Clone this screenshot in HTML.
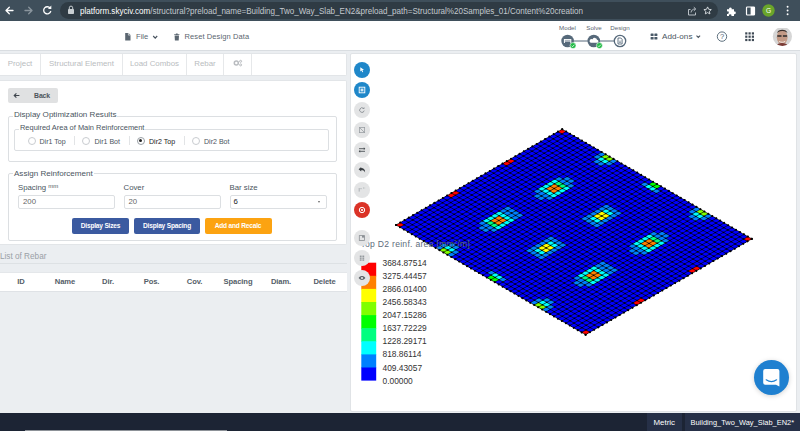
<!DOCTYPE html>
<html>
<head>
<meta charset="utf-8">
<title>SkyCiv</title>
<style>
*{box-sizing:border-box;margin:0;padding:0}
html,body{width:800px;height:431px;overflow:hidden;background:#ebeef1;font-family:"Liberation Sans",sans-serif;}
.abs{position:absolute}
#chrome{position:absolute;left:0;top:0;width:800px;height:20.6px;background:#3f4f5b}
#pill{position:absolute;left:60px;top:2px;width:658px;height:17px;border-radius:9px;background:#2f3b44}
#url{position:absolute;left:80px;top:4px;font-size:9.6px;line-height:13px;color:#c3c9ce;white-space:nowrap;transform:scaleX(0.84);transform-origin:0 0}
#url b{color:#fff;font-weight:normal}
#hdr{position:absolute;left:0;top:20.6px;width:800px;height:30.4px;background:#fff;border-bottom:1px solid #d9dde1}
.t{position:absolute;white-space:nowrap}
#tabs{position:absolute;left:0;top:53.2px;width:346.8px;height:22.6px;background:#fff;border:1px solid #e2e5e8;border-left:none;border-radius:0 2px 2px 0}
#tabs span{position:absolute;top:0;height:20.6px;line-height:20.6px;font-size:7.9px;color:#b9bcc0;border-right:1px solid #e6e8ea;text-align:center}
#card{position:absolute;left:0;top:79.5px;width:346.8px;height:165.2px;background:#fff;border:1px solid #e2e5e8;border-left:none;border-radius:0 2px 2px 0}
.fs{position:absolute;border:1px solid #dcdfe2;border-radius:2px}
.lg{position:absolute;background:#fff;font-size:7.9px;color:#4a5560;padding:0 1px;white-space:nowrap;line-height:9px}
.inp{position:absolute;height:14px;border:1px solid #dcdfe2;border-radius:2px;font-size:7.8px;color:#666;line-height:12px;padding-left:4px;background:#fff}
.btn{position:absolute;height:16.4px;border-radius:2px;color:#fff;font-size:6.6px;font-weight:bold;text-align:center;line-height:16.4px;letter-spacing:-0.2px}
.rad{position:absolute;width:8px;height:8px;border:1px solid #c9ccd0;border-radius:50%;background:#fff}
.rl{position:absolute;font-size:7.05px;color:#4a5560;white-space:nowrap;line-height:9px}
#rp{position:absolute;left:349.5px;top:53.2px;width:447.3px;height:358.5px;background:#fff;border:1px solid #e0e3e6;border-radius:2px}
.cb{position:absolute;left:353.8px;width:16.4px;height:16.4px;border-radius:50%;background:#e3e4e5}
.cb.b{background:#1f87c9}
.cb.r{background:#db3327}
.cb svg{position:absolute;left:0;top:0}
.slab{position:absolute;left:0;top:0}
#leg div{position:absolute;left:361px;width:15px;height:13.1px}
.ll{position:absolute;left:382.5px;font-size:8.4px;color:#333;line-height:10px;white-space:nowrap}
#bot{position:absolute;left:0;top:413.4px;width:800px;height:18px;background:#1c2434}
#th{position:absolute;left:0;top:272.3px;width:346.8px;height:19.4px;background:#fff;border-top:1px solid #e4e7ea;border-bottom:1px solid #dfe2e6}
#th span{position:absolute;top:0;line-height:17.2px;font-size:7.6px;color:#555e68;font-weight:bold;transform:translateX(-50%);white-space:nowrap;letter-spacing:-0.1px}
</style>
</head>
<body>
<!-- browser chrome -->
<div id="chrome">
  <svg class="abs" style="left:0;top:0" width="60" height="21" viewBox="0 0 60 21">
    <g fill="none" stroke="#fff" stroke-width="1.3" stroke-linecap="round" stroke-linejoin="round">
      <path d="M13 10.5H6.2M9.3 7.2L6 10.5l3.3 3.3"/>
      <path d="M25 10.5h6.8M28.7 7.2l3.3 3.3-3.3 3.3" stroke="#8a959d"/>
      <path d="M50.2 8.2a3.6 3.6 0 1 0 .5 3.3"/>
    </g>
    <path d="M51.3 5.6v3.4h-3.4z" fill="#fff"/>
  </svg>
  <div id="pill"></div>
  <svg class="abs" style="left:67px;top:5px" width="8" height="10" viewBox="0 0 8 10"><rect x="1" y="4" width="6" height="5" rx="0.8" fill="#c9cfd3"/><path d="M2.3 4.2V2.8a1.7 1.7 0 0 1 3.4 0v1.4" fill="none" stroke="#c9cfd3" stroke-width="1"/></svg>
  <div id="url"><b>platform.skyciv.com</b>/structural?preload_name=Building_Two_Way_Slab_EN2&amp;preload_path=Structural%20Samples_01/Content%20creation</div>
  <svg class="abs" style="left:680px;top:3px" width="120" height="16" viewBox="0 0 120 16">
    <!-- share -->
    <g fill="none" stroke="#b9c0c6" stroke-width="1">
      <path d="M10.5 6.5H8.5v5.5h7v-2.5"/><path d="M11 9.5c.3-2.2 1.8-3.5 4-3.5M13.8 4.2L15.8 6l-2 1.8"/>
    </g>
    <!-- star -->
    <path d="M27.600 3.900l1.100 2.400 2.600.3-1.950 1.750.55 2.550-2.300-1.300-2.300 1.300.55-2.550-1.950-1.750 2.600-.3z" fill="none" stroke="#dfe3e6" stroke-width="0.900" stroke-linejoin="round"/>
    <!-- puzzle -->
    <path d="M47 6.2h2.2a1.3 1.3 0 1 1 2.4 0H54v2.4a1.3 1.3 0 1 1 0 2.4v2H51.4a1.3 1.3 0 1 0-2.4 0H47v-2.2a1.3 1.3 0 1 0 0-2.4z" fill="#fff"/>
    <!-- side panel -->
    <rect x="66.5" y="4" width="8" height="8" rx="0.8" fill="none" stroke="#fff" stroke-width="1.2"/><rect x="70.6" y="4" width="4" height="8" fill="#fff"/>
    <!-- profile -->
    <circle cx="88.5" cy="7.5" r="6.2" fill="#6aa52a"/>
    <text x="88.5" y="10" font-size="6.6" fill="#fff" text-anchor="middle" font-family="Liberation Sans">G</text>
    <circle cx="107.6" cy="3.8" r="0.95" fill="#fff"/><circle cx="107.6" cy="7.5" r="0.95" fill="#fff"/><circle cx="107.6" cy="11.2" r="0.95" fill="#fff"/>
  </svg>
</div>

<!-- app header -->
<div id="hdr"></div>
<svg class="abs" style="left:120px;top:30px" width="140" height="14" viewBox="0 0 140 14">
  <path d="M5.2 3h3.3l2 2v5.6H5.2z" fill="#5b6670"/><path d="M8.4 3v2.1h2.1" fill="none" stroke="#fff" stroke-width="0.6"/>
  <path d="M33.2 6l2 2.100 2-2.100" fill="none" stroke="#4a5560" stroke-width="1.200"/>
  <path d="M54.600 5.400h4.400l-.3 5h-3.800zM54.200 4.300h5.200v.8h-5.200zM55.900 3.600h1.800v.8h-1.800z" fill="#5b6670"/>
</svg>
<div class="t" style="left:136px;top:32.4px;font-size:7.6px;color:#5b6670;line-height:10px">File</div>
<div class="t" style="left:184.5px;top:32.4px;font-size:7.5px;color:#5b6670;line-height:10px;letter-spacing:0.1px">Reset Design Data</div>

<div class="t" style="left:567.5px;top:24px;font-size:6.2px;color:#5b6670;line-height:7px;transform:translateX(-50%)">Model</div>
<div class="t" style="left:594px;top:24px;font-size:6.2px;color:#5b6670;line-height:7px;transform:translateX(-50%)">Solve</div>
<div class="t" style="left:620px;top:24px;font-size:6.2px;color:#5b6670;line-height:7px;transform:translateX(-50%)">Design</div>
<svg class="abs" style="left:555px;top:31px" width="80" height="20" viewBox="0 0 80 20">
  <path d="M13 10h52" stroke="#56697a" stroke-width="1"/>
  <circle cx="12.6" cy="10" r="6.3" fill="#56697a"/>
  <circle cx="38.8" cy="10" r="6.3" fill="#56697a"/>
  <circle cx="65" cy="10" r="5.7" fill="#fff" stroke="#56697a" stroke-width="1.3"/>
  <path d="M9.4 8v4M15.8 8v4M9.4 10h6.4M9.4 8.6h6.4" stroke="#fff" stroke-width="1" fill="none"/>
  <path d="M35.6 11.8h6.2a1.5 1.5 0 0 0 .2-3 2.3 2.3 0 0 0-4.4-.5 1.8 1.8 0 0 0-2 3.5z" fill="#fff"/>
  <path d="M63 7h2.8l1.3 1.3V13H63z" fill="none" stroke="#56697a" stroke-width="0.9"/><path d="M64 10.2h2.1M64 11.5h2.1" stroke="#56697a" stroke-width="0.6"/>
  <circle cx="18" cy="14.6" r="3" fill="#21ba45" stroke="#fff" stroke-width="0.6"/><path d="M16.6 14.7l1 1 1.8-2" stroke="#fff" stroke-width="0.8" fill="none"/>
  <circle cx="44.4" cy="14.6" r="3" fill="#21ba45" stroke="#fff" stroke-width="0.6"/><path d="M43 14.7l1 1 1.8-2" stroke="#fff" stroke-width="0.8" fill="none"/>
</svg>
<svg class="abs" style="left:648px;top:28px" width="152" height="20" viewBox="0 0 152 20">
  <g fill="#4a5a68"><rect x="2.6" y="5.4" width="3" height="2.6" rx="0.5"/><rect x="6.4" y="5.4" width="3" height="2.6" rx="0.5"/><rect x="2.6" y="8.9" width="3" height="2.6" rx="0.5"/><rect x="6.4" y="8.9" width="3" height="2.6" rx="0.5"/></g>
  <path d="M48.5 7.6l1.8 1.9 1.8-1.9" fill="none" stroke="#4a5560" stroke-width="1.1"/>
  <circle cx="74" cy="8.600" r="4.700" fill="none" stroke="#4d6272" stroke-width="0.900"/>
  <text x="74" y="11.400" font-size="7.600" fill="#4d6272" text-anchor="middle" font-family="Liberation Sans">?</text>
  <g fill="#3f4a55">
    <rect x="97.2" y="4.3" width="2.2" height="2.2"/><rect x="100.5" y="4.3" width="2.2" height="2.2"/><rect x="103.8" y="4.3" width="2.2" height="2.2"/>
    <rect x="97.2" y="7.6" width="2.2" height="2.2"/><rect x="100.5" y="7.6" width="2.2" height="2.2"/><rect x="103.8" y="7.6" width="2.2" height="2.2"/>
    <rect x="97.2" y="10.9" width="2.2" height="2.2"/><rect x="100.5" y="10.9" width="2.2" height="2.2"/><rect x="103.8" y="10.9" width="2.2" height="2.2"/>
  </g>
  <!-- avatar -->
  <clipPath id="av"><circle cx="134.400" cy="8.500" r="9.600"/></clipPath>
  <g clip-path="url(#av)">
    <rect x="124" y="-2" width="22" height="22" fill="#d6d6d6"/>
    <ellipse cx="134.200" cy="9.200" rx="5.400" ry="7.200" fill="#c39a86"/>
    <path d="M129 5.200c.5-4.500 10-4.500 10.500 0l-1-1c-2.500-1.600-6-1.600-8.500 0z" fill="#3a302c"/>
    <path d="M128 18c1-4 11-4 12 0z" fill="#7a3b35"/>
    <path d="M129.300 8h4.200M134.900 8h4.200" stroke="#2b2a2a" stroke-width="1.500"/>
    <path d="M131.2 13.3c1.6 1.3 4.4 1.3 6 0" stroke="#f3e9e4" stroke-width="1" fill="none"/>
  </g>
</svg>
<div class="t" style="left:662px;top:31.5px;font-size:8.1px;color:#4a5560;line-height:10px;letter-spacing:0.05px">Add-ons</div>

<!-- left: tabs -->
<div id="tabs">
  <span style="left:0;width:41px">Project</span>
  <span style="left:41px;width:82px">Structural Element</span>
  <span style="left:123px;width:64px">Load Combos</span>
  <span style="left:187px;width:37px">Rebar</span>
  <span style="left:224px;width:28px"><svg width="10" height="8" viewBox="0 0 10 8" style="vertical-align:-1px"><circle cx="3.3" cy="4" r="2" fill="none" stroke="#b9bcc0" stroke-width="1.5"/><circle cx="7.6" cy="2.3" r="1" fill="none" stroke="#b9bcc0" stroke-width="1"/><circle cx="7.6" cy="5.9" r="1" fill="none" stroke="#b9bcc0" stroke-width="1"/></svg></span>
</div>

<!-- left: card -->
<div id="card"></div>
<div class="abs" style="left:8px;top:87.8px;width:50px;height:15.2px;background:#e0e1e2;border-radius:2px"></div>
<svg class="abs" style="left:12px;top:91px" width="10" height="9" viewBox="0 0 10 9"><path d="M7.4 4.5H2.4M4.4 2.3L2.2 4.5l2.2 2.2" fill="none" stroke="#3e454c" stroke-width="1.1"/></svg>
<div class="t" style="left:34px;top:91.5px;font-size:6.9px;color:#4d545b;line-height:8px;font-weight:bold;letter-spacing:-0.1px">Back</div>

<div class="fs" style="left:8px;top:115.5px;width:329px;height:46.5px"></div>
<div class="lg" style="left:13px;top:110px;font-size:8.05px">Display Optimization Results</div>
<div class="fs" style="left:14px;top:129px;width:315px;height:22px"></div>
<div class="lg" style="left:19px;top:122.5px;font-size:7.45px">Required Area of Main Reinforcement</div>
<div class="rad" style="left:28px;top:136.5px"></div><div class="rl" style="left:39.5px;top:136.5px">Dir1 Top</div>
<div class="rad" style="left:82px;top:136.5px"></div><div class="rl" style="left:94.5px;top:136.5px">Dir1 Bot</div>
<div class="rad" style="left:136.5px;top:136.5px;border-color:#9aa0a6"></div><div class="abs" style="left:138.8px;top:138.8px;width:3.4px;height:3.4px;border-radius:50%;background:#222"></div><div class="rl" style="left:149px;top:136.5px;color:#222">Dir2 Top</div>
<div class="rad" style="left:191.5px;top:136.5px"></div><div class="rl" style="left:204px;top:136.5px">Dir2 Bot</div>
<div class="abs" style="left:74px;top:136px;width:1px;height:9px;background:#e2e4e6"></div>
<div class="abs" style="left:128.5px;top:136px;width:1px;height:9px;background:#e2e4e6"></div>
<div class="abs" style="left:183.5px;top:136px;width:1px;height:9px;background:#e2e4e6"></div>

<div class="fs" style="left:8px;top:172.8px;width:329px;height:68.2px"></div>
<div class="lg" style="left:13px;top:168.5px;font-size:8.05px">Assign Reinforcement</div>
<div class="t" style="left:18px;top:183px;font-size:7.8px;color:#4a5560;line-height:9px">Spacing <span style="font-size:6px;position:relative;top:-2.4px">mm</span></div>
<div class="t" style="left:123.5px;top:183px;font-size:7.8px;color:#4a5560;line-height:9px">Cover</div>
<div class="t" style="left:229.5px;top:183px;font-size:7.8px;color:#4a5560;line-height:9px">Bar size</div>
<div class="inp" style="left:18px;top:194.5px;width:97px">200</div>
<div class="inp" style="left:123.5px;top:194.5px;width:97px">20</div>
<div class="inp" style="left:229.5px;top:194.5px;width:97px;color:#222;padding-left:3px">6</div>
<div class="abs" style="left:317.5px;top:201px;width:0;height:0;border-left:1.8px solid transparent;border-right:1.8px solid transparent;border-top:2.2px solid #666"></div>
<div class="btn" style="left:72px;top:218px;width:57px;background:#3b5aa0">Display Sizes</div>
<div class="btn" style="left:134px;top:218px;width:66px;background:#3b5aa0">Display Spacing</div>
<div class="btn" style="left:204.5px;top:218px;width:67px;background:#fca311">Add and Recalc</div>

<!-- list of rebar -->
<div class="t" style="left:0;top:251.8px;font-size:8.2px;color:#9aa0a6;line-height:9px">List of Rebar</div>
<div class="abs" style="left:0;top:262.8px;width:346.8px;height:1px;background:#dde1e4"></div>
<div id="th">
  <span style="left:21px">ID</span><span style="left:65px">Name</span><span style="left:108px">Dir.</span><span style="left:151.5px">Pos.</span>
  <span style="left:194.5px">Cov.</span><span style="left:238px">Spacing</span><span style="left:281px">Diam.</span><span style="left:324.5px">Delete</span>
</div>

<!-- right panel -->
<div id="rp"></div>
<svg class="slab" width="800" height="431" viewBox="0 0 800 431">
<g transform="matrix(-4.2615 2.4564 3.9500 2.2854 562.20 129.20)" shape-rendering="crispEdges">
<rect x="0" y="0" width="39" height="48" fill="#0000ff"/>
<rect x="0" y="0" width="1" height="1" fill="#ff0000"/>
<rect x="0" y="10" width="1" height="1" fill="#0080ff"/>
<rect x="0" y="11" width="1" height="1" fill="#80ff00"/>
<rect x="0" y="12" width="1" height="1" fill="#80ff00"/>
<rect x="0" y="13" width="1" height="1" fill="#0080ff"/>
<rect x="0" y="23" width="1" height="1" fill="#00ff00"/>
<rect x="0" y="24" width="1" height="1" fill="#00ff00"/>
<rect x="0" y="34" width="1" height="1" fill="#0080ff"/>
<rect x="0" y="35" width="1" height="1" fill="#80ff00"/>
<rect x="0" y="36" width="1" height="1" fill="#80ff00"/>
<rect x="0" y="37" width="1" height="1" fill="#0080ff"/>
<rect x="0" y="47" width="1" height="1" fill="#ff0000"/>
<rect x="1" y="10" width="1" height="1" fill="#0080ff"/>
<rect x="1" y="11" width="1" height="1" fill="#00ffff"/>
<rect x="1" y="12" width="1" height="1" fill="#00ffff"/>
<rect x="1" y="13" width="1" height="1" fill="#0080ff"/>
<rect x="1" y="22" width="1" height="1" fill="#0080ff"/>
<rect x="1" y="23" width="1" height="1" fill="#00ffff"/>
<rect x="1" y="24" width="1" height="1" fill="#00ffff"/>
<rect x="1" y="25" width="1" height="1" fill="#0080ff"/>
<rect x="1" y="34" width="1" height="1" fill="#0080ff"/>
<rect x="1" y="35" width="1" height="1" fill="#00ffff"/>
<rect x="1" y="36" width="1" height="1" fill="#00ffff"/>
<rect x="1" y="37" width="1" height="1" fill="#0080ff"/>
<rect x="2" y="11" width="1" height="1" fill="#0080ff"/>
<rect x="2" y="12" width="1" height="1" fill="#0080ff"/>
<rect x="2" y="35" width="1" height="1" fill="#0080ff"/>
<rect x="2" y="36" width="1" height="1" fill="#0080ff"/>
<rect x="9" y="11" width="1" height="1" fill="#0080ff"/>
<rect x="9" y="12" width="1" height="1" fill="#0080ff"/>
<rect x="9" y="35" width="1" height="1" fill="#0080ff"/>
<rect x="9" y="36" width="1" height="1" fill="#0080ff"/>
<rect x="10" y="10" width="1" height="1" fill="#0080ff"/>
<rect x="10" y="11" width="1" height="1" fill="#0080ff"/>
<rect x="10" y="12" width="1" height="1" fill="#0080ff"/>
<rect x="10" y="13" width="1" height="1" fill="#0080ff"/>
<rect x="10" y="22" width="1" height="1" fill="#0080ff"/>
<rect x="10" y="23" width="1" height="1" fill="#0080ff"/>
<rect x="10" y="24" width="1" height="1" fill="#0080ff"/>
<rect x="10" y="25" width="1" height="1" fill="#0080ff"/>
<rect x="10" y="34" width="1" height="1" fill="#0080ff"/>
<rect x="10" y="35" width="1" height="1" fill="#0080ff"/>
<rect x="10" y="36" width="1" height="1" fill="#0080ff"/>
<rect x="10" y="37" width="1" height="1" fill="#0080ff"/>
<rect x="11" y="10" width="1" height="1" fill="#00ffff"/>
<rect x="11" y="11" width="1" height="1" fill="#00ff80"/>
<rect x="11" y="12" width="1" height="1" fill="#00ff80"/>
<rect x="11" y="13" width="1" height="1" fill="#00ffff"/>
<rect x="11" y="22" width="1" height="1" fill="#0080ff"/>
<rect x="11" y="23" width="1" height="1" fill="#00ffff"/>
<rect x="11" y="24" width="1" height="1" fill="#00ffff"/>
<rect x="11" y="25" width="1" height="1" fill="#0080ff"/>
<rect x="11" y="34" width="1" height="1" fill="#00ffff"/>
<rect x="11" y="35" width="1" height="1" fill="#00ff80"/>
<rect x="11" y="36" width="1" height="1" fill="#00ff80"/>
<rect x="11" y="37" width="1" height="1" fill="#00ffff"/>
<rect x="12" y="0" width="1" height="1" fill="#ff0000"/>
<rect x="12" y="10" width="1" height="1" fill="#00ffff"/>
<rect x="12" y="11" width="1" height="1" fill="#ff8000"/>
<rect x="12" y="12" width="1" height="1" fill="#ff8000"/>
<rect x="12" y="13" width="1" height="1" fill="#00ffff"/>
<rect x="12" y="22" width="1" height="1" fill="#0080ff"/>
<rect x="12" y="23" width="1" height="1" fill="#ffff00"/>
<rect x="12" y="24" width="1" height="1" fill="#ffff00"/>
<rect x="12" y="25" width="1" height="1" fill="#0080ff"/>
<rect x="12" y="34" width="1" height="1" fill="#00ffff"/>
<rect x="12" y="35" width="1" height="1" fill="#ff8000"/>
<rect x="12" y="36" width="1" height="1" fill="#ff8000"/>
<rect x="12" y="37" width="1" height="1" fill="#00ffff"/>
<rect x="12" y="47" width="1" height="1" fill="#ff0000"/>
<rect x="13" y="0" width="1" height="1" fill="#ff0000"/>
<rect x="13" y="10" width="1" height="1" fill="#00ffff"/>
<rect x="13" y="11" width="1" height="1" fill="#ff8000"/>
<rect x="13" y="12" width="1" height="1" fill="#ff8000"/>
<rect x="13" y="13" width="1" height="1" fill="#00ffff"/>
<rect x="13" y="22" width="1" height="1" fill="#0080ff"/>
<rect x="13" y="23" width="1" height="1" fill="#ffff00"/>
<rect x="13" y="24" width="1" height="1" fill="#ffff00"/>
<rect x="13" y="25" width="1" height="1" fill="#0080ff"/>
<rect x="13" y="34" width="1" height="1" fill="#00ffff"/>
<rect x="13" y="35" width="1" height="1" fill="#ff8000"/>
<rect x="13" y="36" width="1" height="1" fill="#ff8000"/>
<rect x="13" y="37" width="1" height="1" fill="#00ffff"/>
<rect x="13" y="47" width="1" height="1" fill="#ff0000"/>
<rect x="14" y="10" width="1" height="1" fill="#00ffff"/>
<rect x="14" y="11" width="1" height="1" fill="#00ffff"/>
<rect x="14" y="12" width="1" height="1" fill="#00ffff"/>
<rect x="14" y="13" width="1" height="1" fill="#00ffff"/>
<rect x="14" y="22" width="1" height="1" fill="#0080ff"/>
<rect x="14" y="23" width="1" height="1" fill="#00ffff"/>
<rect x="14" y="24" width="1" height="1" fill="#00ffff"/>
<rect x="14" y="25" width="1" height="1" fill="#0080ff"/>
<rect x="14" y="34" width="1" height="1" fill="#00ffff"/>
<rect x="14" y="35" width="1" height="1" fill="#00ffff"/>
<rect x="14" y="36" width="1" height="1" fill="#00ffff"/>
<rect x="14" y="37" width="1" height="1" fill="#00ffff"/>
<rect x="15" y="10" width="1" height="1" fill="#0080ff"/>
<rect x="15" y="11" width="1" height="1" fill="#0080ff"/>
<rect x="15" y="12" width="1" height="1" fill="#0080ff"/>
<rect x="15" y="13" width="1" height="1" fill="#0080ff"/>
<rect x="15" y="22" width="1" height="1" fill="#0080ff"/>
<rect x="15" y="23" width="1" height="1" fill="#0080ff"/>
<rect x="15" y="24" width="1" height="1" fill="#0080ff"/>
<rect x="15" y="25" width="1" height="1" fill="#0080ff"/>
<rect x="15" y="34" width="1" height="1" fill="#0080ff"/>
<rect x="15" y="35" width="1" height="1" fill="#0080ff"/>
<rect x="15" y="36" width="1" height="1" fill="#0080ff"/>
<rect x="15" y="37" width="1" height="1" fill="#0080ff"/>
<rect x="16" y="11" width="1" height="1" fill="#0080ff"/>
<rect x="16" y="12" width="1" height="1" fill="#0080ff"/>
<rect x="16" y="35" width="1" height="1" fill="#0080ff"/>
<rect x="16" y="36" width="1" height="1" fill="#0080ff"/>
<rect x="22" y="10" width="1" height="1" fill="#0080ff"/>
<rect x="22" y="11" width="1" height="1" fill="#0080ff"/>
<rect x="22" y="12" width="1" height="1" fill="#0080ff"/>
<rect x="22" y="13" width="1" height="1" fill="#0080ff"/>
<rect x="22" y="34" width="1" height="1" fill="#0080ff"/>
<rect x="22" y="35" width="1" height="1" fill="#0080ff"/>
<rect x="22" y="36" width="1" height="1" fill="#0080ff"/>
<rect x="22" y="37" width="1" height="1" fill="#0080ff"/>
<rect x="23" y="10" width="1" height="1" fill="#0080ff"/>
<rect x="23" y="11" width="1" height="1" fill="#0080ff"/>
<rect x="23" y="12" width="1" height="1" fill="#0080ff"/>
<rect x="23" y="13" width="1" height="1" fill="#0080ff"/>
<rect x="23" y="22" width="1" height="1" fill="#0080ff"/>
<rect x="23" y="23" width="1" height="1" fill="#0080ff"/>
<rect x="23" y="24" width="1" height="1" fill="#0080ff"/>
<rect x="23" y="25" width="1" height="1" fill="#0080ff"/>
<rect x="23" y="34" width="1" height="1" fill="#0080ff"/>
<rect x="23" y="35" width="1" height="1" fill="#0080ff"/>
<rect x="23" y="36" width="1" height="1" fill="#0080ff"/>
<rect x="23" y="37" width="1" height="1" fill="#0080ff"/>
<rect x="24" y="10" width="1" height="1" fill="#00ffff"/>
<rect x="24" y="11" width="1" height="1" fill="#00ffff"/>
<rect x="24" y="12" width="1" height="1" fill="#00ffff"/>
<rect x="24" y="13" width="1" height="1" fill="#00ffff"/>
<rect x="24" y="22" width="1" height="1" fill="#0080ff"/>
<rect x="24" y="23" width="1" height="1" fill="#00ffff"/>
<rect x="24" y="24" width="1" height="1" fill="#00ffff"/>
<rect x="24" y="25" width="1" height="1" fill="#0080ff"/>
<rect x="24" y="34" width="1" height="1" fill="#00ffff"/>
<rect x="24" y="35" width="1" height="1" fill="#00ffff"/>
<rect x="24" y="36" width="1" height="1" fill="#00ffff"/>
<rect x="24" y="37" width="1" height="1" fill="#00ffff"/>
<rect x="25" y="0" width="1" height="1" fill="#ff0000"/>
<rect x="25" y="10" width="1" height="1" fill="#00ffff"/>
<rect x="25" y="11" width="1" height="1" fill="#ff8000"/>
<rect x="25" y="12" width="1" height="1" fill="#ff8000"/>
<rect x="25" y="13" width="1" height="1" fill="#00ffff"/>
<rect x="25" y="22" width="1" height="1" fill="#0080ff"/>
<rect x="25" y="23" width="1" height="1" fill="#ffff00"/>
<rect x="25" y="24" width="1" height="1" fill="#ffff00"/>
<rect x="25" y="25" width="1" height="1" fill="#0080ff"/>
<rect x="25" y="34" width="1" height="1" fill="#00ffff"/>
<rect x="25" y="35" width="1" height="1" fill="#ff8000"/>
<rect x="25" y="36" width="1" height="1" fill="#ff8000"/>
<rect x="25" y="37" width="1" height="1" fill="#00ffff"/>
<rect x="25" y="47" width="1" height="1" fill="#ff0000"/>
<rect x="26" y="0" width="1" height="1" fill="#ff0000"/>
<rect x="26" y="10" width="1" height="1" fill="#00ffff"/>
<rect x="26" y="11" width="1" height="1" fill="#ff8000"/>
<rect x="26" y="12" width="1" height="1" fill="#ff8000"/>
<rect x="26" y="13" width="1" height="1" fill="#00ffff"/>
<rect x="26" y="22" width="1" height="1" fill="#0080ff"/>
<rect x="26" y="23" width="1" height="1" fill="#ffff00"/>
<rect x="26" y="24" width="1" height="1" fill="#ffff00"/>
<rect x="26" y="25" width="1" height="1" fill="#0080ff"/>
<rect x="26" y="34" width="1" height="1" fill="#00ffff"/>
<rect x="26" y="35" width="1" height="1" fill="#ff8000"/>
<rect x="26" y="36" width="1" height="1" fill="#ff8000"/>
<rect x="26" y="37" width="1" height="1" fill="#00ffff"/>
<rect x="26" y="47" width="1" height="1" fill="#ff0000"/>
<rect x="27" y="10" width="1" height="1" fill="#00ffff"/>
<rect x="27" y="11" width="1" height="1" fill="#00ff80"/>
<rect x="27" y="12" width="1" height="1" fill="#00ff80"/>
<rect x="27" y="13" width="1" height="1" fill="#00ffff"/>
<rect x="27" y="22" width="1" height="1" fill="#0080ff"/>
<rect x="27" y="23" width="1" height="1" fill="#00ffff"/>
<rect x="27" y="24" width="1" height="1" fill="#00ffff"/>
<rect x="27" y="25" width="1" height="1" fill="#0080ff"/>
<rect x="27" y="34" width="1" height="1" fill="#00ffff"/>
<rect x="27" y="35" width="1" height="1" fill="#00ff80"/>
<rect x="27" y="36" width="1" height="1" fill="#00ff80"/>
<rect x="27" y="37" width="1" height="1" fill="#00ffff"/>
<rect x="28" y="10" width="1" height="1" fill="#0080ff"/>
<rect x="28" y="11" width="1" height="1" fill="#0080ff"/>
<rect x="28" y="12" width="1" height="1" fill="#0080ff"/>
<rect x="28" y="13" width="1" height="1" fill="#0080ff"/>
<rect x="28" y="22" width="1" height="1" fill="#0080ff"/>
<rect x="28" y="23" width="1" height="1" fill="#0080ff"/>
<rect x="28" y="24" width="1" height="1" fill="#0080ff"/>
<rect x="28" y="25" width="1" height="1" fill="#0080ff"/>
<rect x="28" y="34" width="1" height="1" fill="#0080ff"/>
<rect x="28" y="35" width="1" height="1" fill="#0080ff"/>
<rect x="28" y="36" width="1" height="1" fill="#0080ff"/>
<rect x="28" y="37" width="1" height="1" fill="#0080ff"/>
<rect x="29" y="11" width="1" height="1" fill="#0080ff"/>
<rect x="29" y="12" width="1" height="1" fill="#0080ff"/>
<rect x="29" y="35" width="1" height="1" fill="#0080ff"/>
<rect x="29" y="36" width="1" height="1" fill="#0080ff"/>
<rect x="36" y="11" width="1" height="1" fill="#0080ff"/>
<rect x="36" y="12" width="1" height="1" fill="#0080ff"/>
<rect x="36" y="35" width="1" height="1" fill="#0080ff"/>
<rect x="36" y="36" width="1" height="1" fill="#0080ff"/>
<rect x="37" y="10" width="1" height="1" fill="#0080ff"/>
<rect x="37" y="11" width="1" height="1" fill="#00ffff"/>
<rect x="37" y="12" width="1" height="1" fill="#00ffff"/>
<rect x="37" y="13" width="1" height="1" fill="#0080ff"/>
<rect x="37" y="22" width="1" height="1" fill="#0080ff"/>
<rect x="37" y="23" width="1" height="1" fill="#00ffff"/>
<rect x="37" y="24" width="1" height="1" fill="#00ffff"/>
<rect x="37" y="25" width="1" height="1" fill="#0080ff"/>
<rect x="37" y="34" width="1" height="1" fill="#0080ff"/>
<rect x="37" y="35" width="1" height="1" fill="#00ffff"/>
<rect x="37" y="36" width="1" height="1" fill="#00ffff"/>
<rect x="37" y="37" width="1" height="1" fill="#0080ff"/>
<rect x="38" y="0" width="1" height="1" fill="#ff0000"/>
<rect x="38" y="10" width="1" height="1" fill="#0080ff"/>
<rect x="38" y="11" width="1" height="1" fill="#80ff00"/>
<rect x="38" y="12" width="1" height="1" fill="#80ff00"/>
<rect x="38" y="13" width="1" height="1" fill="#0080ff"/>
<rect x="38" y="23" width="1" height="1" fill="#00ff00"/>
<rect x="38" y="24" width="1" height="1" fill="#00ff00"/>
<rect x="38" y="34" width="1" height="1" fill="#0080ff"/>
<rect x="38" y="35" width="1" height="1" fill="#80ff00"/>
<rect x="38" y="36" width="1" height="1" fill="#80ff00"/>
<rect x="38" y="37" width="1" height="1" fill="#0080ff"/>
<rect x="38" y="47" width="1" height="1" fill="#ff0000"/>
</g>
<path d="M562.20 129.20L751.80 238.90M557.94 131.66L747.54 241.36M553.68 134.11L743.28 243.81M549.42 136.57L739.02 246.27M545.15 139.03L734.75 248.73M540.89 141.48L730.49 251.18M536.63 143.94L726.23 253.64M532.37 146.39L721.97 256.09M528.11 148.85L717.71 258.55M523.85 151.31L713.45 261.01M519.58 153.76L709.18 263.46M515.32 156.22L704.92 265.92M511.06 158.68L700.66 268.38M506.80 161.13L696.40 270.83M502.54 163.59L692.14 273.29M498.28 166.05L687.88 275.75M494.02 168.50L683.62 278.20M489.75 170.96L679.35 280.66M485.49 173.42L675.09 283.12M481.23 175.87L670.83 285.57M476.97 178.33L666.57 288.03M472.71 180.78L662.31 290.48M468.45 183.24L658.05 292.94M464.18 185.70L653.78 295.40M459.92 188.15L649.52 297.85M455.66 190.61L645.26 300.31M451.40 193.07L641.00 302.77M447.14 195.52L636.74 305.22M442.88 197.98L632.48 307.68M438.62 200.44L628.22 310.14M434.35 202.89L623.95 312.59M430.09 205.35L619.69 315.05M425.83 207.81L615.43 317.51M421.57 210.26L611.17 319.96M417.31 212.72L606.91 322.42M413.05 215.17L602.65 324.87M408.78 217.63L598.38 327.33M404.52 220.09L594.12 329.79M400.26 222.54L589.86 332.24M396.00 225.00L585.60 334.70M562.20 129.20L396.00 225.00M566.15 131.49L399.95 227.29M570.10 133.77L403.90 229.57M574.05 136.06L407.85 231.86M578.00 138.34L411.80 234.14M581.95 140.63L415.75 236.43M585.90 142.91L419.70 238.71M589.85 145.20L423.65 241.00M593.80 147.48L427.60 243.28M597.75 149.77L431.55 245.57M601.70 152.05L435.50 247.85M605.65 154.34L439.45 250.14M609.60 156.62L443.40 252.42M613.55 158.91L447.35 254.71M617.50 161.20L451.30 257.00M621.45 163.48L455.25 259.28M625.40 165.77L459.20 261.57M629.35 168.05L463.15 263.85M633.30 170.34L467.10 266.14M637.25 172.62L471.05 268.42M641.20 174.91L475.00 270.71M645.15 177.19L478.95 272.99M649.10 179.48L482.90 275.28M653.05 181.76L486.85 277.56M657.00 184.05L490.80 279.85M660.95 186.34L494.75 282.14M664.90 188.62L498.70 284.42M668.85 190.91L502.65 286.71M672.80 193.19L506.60 288.99M676.75 195.48L510.55 291.28M680.70 197.76L514.50 293.56M684.65 200.05L518.45 295.85M688.60 202.33L522.40 298.13M692.55 204.62L526.35 300.42M696.50 206.90L530.30 302.70M700.45 209.19L534.25 304.99M704.40 211.47L538.20 307.27M708.35 213.76L542.15 309.56M712.30 216.05L546.10 311.85M716.25 218.33L550.05 314.13M720.20 220.62L554.00 316.42M724.15 222.90L557.95 318.70M728.10 225.19L561.90 320.99M732.05 227.47L565.85 323.27M736.00 229.76L569.80 325.56M739.95 232.04L573.75 327.84M743.90 234.33L577.70 330.13M747.85 236.61L581.65 332.41M751.80 238.90L585.60 334.70" stroke="#000" stroke-width="0.85" fill="none" stroke-opacity="0.8"/>
<path d="M562.20 129.20L751.88 238.95M557.94 131.66L747.62 241.40M553.68 134.11L743.36 243.86M549.42 136.57L739.09 246.31M545.15 139.03L734.83 248.77M540.89 141.48L730.57 251.23M536.63 143.94L726.31 253.68M532.37 146.39L722.05 256.14M528.11 148.85L717.79 258.60M523.85 151.31L713.53 261.05M519.58 153.76L709.26 263.51M515.32 156.22L705.00 265.97M511.06 158.68L700.74 268.42M506.80 161.13L696.48 270.88M502.54 163.59L692.22 273.34M498.28 166.05L687.96 275.79M494.02 168.50L683.69 278.25M489.75 170.96L679.43 280.70M485.49 173.42L675.17 283.16M481.23 175.87L670.91 285.62M476.97 178.33L666.65 288.07M472.71 180.78L662.39 290.53M468.45 183.24L658.13 292.99M464.18 185.70L653.86 295.44M459.92 188.15L649.60 297.90M455.66 190.61L645.34 300.36M451.40 193.07L641.08 302.81M447.14 195.52L636.82 305.27M442.88 197.98L632.56 307.73M438.62 200.44L628.29 310.18M434.35 202.89L624.03 312.64M430.09 205.35L619.77 315.09M425.83 207.81L615.51 317.55M421.57 210.26L611.25 320.01M417.31 212.72L606.99 322.46M413.05 215.17L602.73 324.92M408.78 217.63L598.46 327.38M404.52 220.09L594.20 329.83M400.26 222.54L589.94 332.29M396.00 225.00L585.68 334.75" stroke="#000" stroke-width="1.5" stroke-linecap="round" stroke-dasharray="0 4.5635" fill="none"/>
<path d="M562.20 129.20L751.88 238.95M396.00 225.00L585.68 334.75" stroke="#000" stroke-width="2.1" stroke-linecap="round" stroke-dasharray="0 4.5635" fill="none"/>
<path d="M562.20 129.20L395.91 225.05M751.80 238.90L585.51 334.75" stroke="#000" stroke-width="2.1" stroke-linecap="round" stroke-dasharray="0 4.9188" fill="none"/>
</svg>

<!-- legend -->
<div class="t" style="left:360.5px;top:239px;font-size:8.6px;color:#5d6c7b;line-height:10px;letter-spacing:0.27px">Top D2 reinf. area [mm<span style="font-size:5.5px;position:relative;top:-2.8px">2</span>/m]</div>
<svg class="abs" style="left:361px;top:262px" width="16" height="120" viewBox="0 0 16 120"><rect x="0.3" y="0.70" width="14.9" height="13.70" fill="#ff0000"/><rect x="0.3" y="13.80" width="14.9" height="13.70" fill="#ff8000"/><rect x="0.3" y="26.90" width="14.9" height="13.70" fill="#ffff00"/><rect x="0.3" y="40.00" width="14.9" height="13.70" fill="#80ff00"/><rect x="0.3" y="53.10" width="14.9" height="13.70" fill="#00ff00"/><rect x="0.3" y="66.20" width="14.9" height="13.70" fill="#00ff80"/><rect x="0.3" y="79.30" width="14.9" height="13.70" fill="#00ffff"/><rect x="0.3" y="92.40" width="14.9" height="13.70" fill="#0080ff"/><rect x="0.3" y="105.50" width="14.9" height="13.10" fill="#0000ff"/></svg>
<div class="ll" style="top:257.7px">3684.87514</div>
<div class="ll" style="top:270.8px">3275.44457</div>
<div class="ll" style="top:283.9px">2866.01400</div>
<div class="ll" style="top:297.0px">2456.58343</div>
<div class="ll" style="top:310.1px">2047.15286</div>
<div class="ll" style="top:323.2px">1637.72229</div>
<div class="ll" style="top:336.3px">1228.29171</div>
<div class="ll" style="top:349.4px">818.86114</div>
<div class="ll" style="top:362.5px">409.43057</div>
<div class="ll" style="top:375.6px">0.00000</div>

<!-- toolbar buttons -->
<div class="cb b" style="top:61.5px"><svg width="16" height="16" viewBox="0 0 16 16"><path d="M6.3 5.2l3.6 2.6-1.5.4.8 1.7-.9.4-.8-1.7-1.2.9z" fill="#fff"/></svg></div>
<div class="cb b" style="top:81.5px"><svg width="16" height="16" viewBox="0 0 16 16"><rect x="5.2" y="5.2" width="5.6" height="5.6" fill="none" stroke="#fff" stroke-width="0.9"/><rect x="6.6" y="6.6" width="2.8" height="2.8" fill="#cfe6f5"/></svg></div>
<div class="cb" style="top:101.5px"><svg width="16" height="16" viewBox="0 0 16 16"><path d="M10.2 8.6a2.3 2.3 0 1 1-.7-2.2" fill="none" stroke="#8a8f94" stroke-width="0.9"/><path d="M10.4 5v2h-2z" fill="#8a8f94"/></svg></div>
<div class="cb" style="top:121.5px"><svg width="16" height="16" viewBox="0 0 16 16"><rect x="5.4" y="5.4" width="5.2" height="5.2" fill="none" stroke="#9a9fa4" stroke-width="0.8"/><path d="M5.4 5.4l5.2 5.2" stroke="#9a9fa4" stroke-width="0.8"/></svg></div>
<div class="cb" style="top:141.5px"><svg width="16" height="16" viewBox="0 0 16 16"><path d="M5 6.7h6M5 9.3h6" stroke="#4a4f54" stroke-width="0.9"/><path d="M9.8 5.3l1.5 1.4-1.5 1.4zM6.2 7.9L4.7 9.3l1.5 1.4z" fill="#4a4f54"/></svg></div>
<div class="cb" style="top:161.5px"><svg width="16" height="16" viewBox="0 0 16 16"><path d="M7.2 5L4.6 7.3l2.6 2.3V8.2c2-.1 3.2.5 3.9 2.2.2-2.600-1.300-4.200-3.900-4.300z" fill="#3a3f44"/></svg></div>
<div class="cb" style="top:181.5px"><svg width="16" height="16" viewBox="0 0 16 16"><path d="M5.2 6v3.6M7 6v1.2M9 6h.9M10.6 6h.5" stroke="#a5aaaf" stroke-width="0.9"/></svg></div>
<div class="cb r" style="top:201.5px"><svg width="16" height="16" viewBox="0 0 16 16"><circle cx="8" cy="8" r="2.7" fill="none" stroke="#fff" stroke-width="1"/><path d="M6.9 6.900l2.200 2.200M9.100 6.900l-2.200 2.200" stroke="#fff" stroke-width="0.8"/></svg></div>
<div class="cb" style="top:229.5px"><svg width="16" height="16" viewBox="0 0 16 16"><rect x="5.300" y="5.600" width="5.200" height="4.800" fill="none" stroke="#8a8f94" stroke-width="0.8"/><rect x="8" y="5.600" width="2.500" height="2" fill="#8a8f94"/></svg></div>
<div class="cb" style="top:249.5px"><svg width="16" height="16" viewBox="0 0 16 16"><g fill="#8a8f94"><rect x="5.800" y="5.600" width="1.800" height="1.300"/><rect x="8.400" y="5.600" width="1.800" height="1.300"/><rect x="5.800" y="7.500" width="1.800" height="1.300"/><rect x="8.400" y="7.500" width="1.800" height="1.300"/><rect x="5.800" y="9.400" width="1.800" height="1.300"/><rect x="8.400" y="9.400" width="1.800" height="1.300"/></g></svg></div>
<div class="cb" style="top:269.5px"><svg width="16" height="16" viewBox="0 0 16 16"><path d="M4.600 8c1.800-2.600 5-2.600 6.800 0-1.800 2.600-5 2.600-6.800 0z" fill="#5f656b"/><circle cx="8" cy="8" r="1.100" fill="#e3e4e5"/></svg></div>

<!-- chat -->
<div class="abs" style="left:753.5px;top:359.5px;width:35.500px;height:35.500px;border-radius:50%;background:#1f80d0;box-shadow:0 1px 5px rgba(0,0,0,0.18)"></div>
<svg class="abs" style="left:753.5px;top:359.5px" width="36" height="36" viewBox="0 0 36 36"><path d="M11.200 9h12.200a2 2 0 0 1 2 2v15.600l-3.400-1.800H11.200a2 2 0 0 1-2-2V11a2 2 0 0 1 2-2z" fill="#fff"/><path d="M12.200 19.800c3 2 7.400 2 10.400 0" fill="none" stroke="#1f80d0" stroke-width="1.200" stroke-linecap="round"/></svg>

<!-- bottom bar -->
<div id="bot">
  <div class="abs" style="left:647px;top:0;width:35px;height:18px;background:#263047"></div>
  <div class="abs" style="left:685px;top:0;width:115px;height:18px;background:#263047"></div>
  <div class="t" style="left:653.5px;top:4.5px;font-size:7.9px;color:#fff;line-height:9px">Metric</div>
  <div class="t" style="left:690.5px;top:4.5px;font-size:7.4px;color:#fff;line-height:9px;letter-spacing:0.03px">Building_Two_Way_Slab_EN2*</div>
  <div class="abs" style="left:25px;top:16.500px;width:202px;height:1.500px;background:#8d9298"></div>
</div>
</body>
</html>
